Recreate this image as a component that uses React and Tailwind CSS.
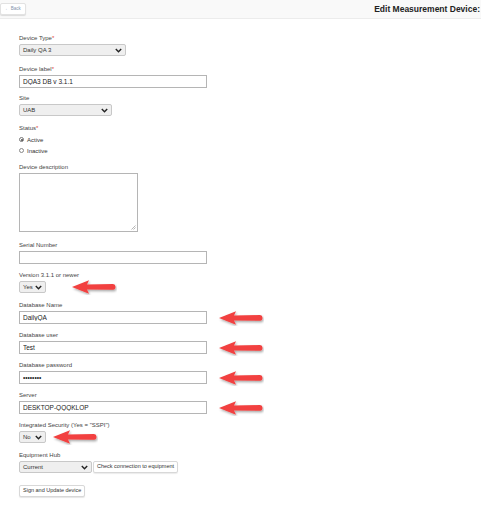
import React from 'react';

const font = { fontFamily: '"Liberation Sans", Arial, sans-serif' };

const Arrow = ({ className = '' }) => (
    <svg width="46" height="16" viewBox="0 0 46 16" className={className}>
        <defs>
            <filter id="sh" x="-20%" y="-40%" width="140%" height="180%">
                <feDropShadow dx="1" dy="1.5" stdDeviation="1" floodColor="#000" floodOpacity="0.35" />
            </filter>
        </defs>
        <path
            d="M1 8 L18 1.2 L16 5.6 L42 5 Q44.5 5.2 44.5 7.8 Q44.5 10.6 42 10.8 L16 10.4 L18 14.8 Z"
            fill="#f2413f"
            filter="url(#sh)"
        />
    </svg>
);

const Chevron = () => (
    <svg width="7" height="5" viewBox="0 0 7 5">
        <path d="M0.8 1 L3.5 3.8 L6.2 1" fill="none" stroke="#222" strokeWidth="1.4" />
    </svg>
);

const FakeSelect = ({ value, width }) => (
    <div
        className={`${width} h-[12px] flex items-center justify-between gap-[2px] pl-[3px] pr-[3px] bg-[#efefef] border border-[#c8c8c8] rounded-[2px] text-[6px] text-[#333]`}
    >
        <span>{value}</span>
        <Chevron />
    </div>
);

const TextBox = ({ value, type = 'text' }) => (
    <input
        type={type}
        value={value}
        readOnly
        className="block w-[188px] h-[13px] px-[3px] border border-[#b5b5b5] bg-white text-[6.5px] text-[#222] outline-none"
        style={font}
    />
);

const Label = ({ children, req }) => (
    <div className="text-[6px] text-[#444] leading-[8px] mb-[2px]">
        {children}
        {req && <span className="text-[#e0453a]">*</span>}
    </div>
);

const App = () => {
    return (
        <div className="w-[481px] h-[512px] bg-white overflow-hidden leading-none" style={font}>
            <div className="h-[19px] bg-[#f9f9f9] border-b border-[#ececec] flex items-center justify-between">
                <div className="h-[12px] w-[26px] bg-white border border-[#e2e2e2] shadow-[0_1px_1px_rgba(0,0,0,0.12)] rounded-[2px] flex items-center justify-center text-[4.5px] text-[#7f93ad]">
                    ← Back
                </div>
                <div className="text-[8.5px] font-bold text-[#222] pr-[1px]">Edit Measurement Device:</div>
            </div>

            <div className="pl-[19px] pt-[15px]">
                <Label req>Device Type</Label>
                <FakeSelect value="Daily QA 3" width="w-[107px]" />

                <div className="mt-[9px]">
                    <Label req>Device label</Label>
                    <TextBox value="DQA3 DB v 3.1.1" />
                </div>

                <div className="mt-[6px]">
                    <Label>Site</Label>
                    <FakeSelect value="UAB" width="w-[93px]" />
                </div>

                <div className="mt-[8px]">
                    <Label req>Status</Label>
                    <div className="flex items-center gap-[3px] text-[6px] text-[#333] h-[11px]">
                        <span className="w-[5px] h-[5px] rounded-full border border-[#777] flex items-center justify-center">
                            <span className="w-[2px] h-[2px] rounded-full bg-[#444]" />
                        </span>
                        Active
                    </div>
                    <div className="flex items-center gap-[3px] text-[6px] text-[#333] h-[11px]">
                        <span className="w-[5px] h-[5px] rounded-full border border-[#888]" />
                        Inactive
                    </div>
                </div>

                <div className="mt-[7px]">
                    <Label>Device description</Label>
                    <div className="relative w-[119px] h-[59px] border border-[#b5b5b5] bg-white">
                        <svg width="5" height="5" viewBox="0 0 5 5" className="absolute right-[1px] bottom-[1px]">
                            <path d="M4.5 0.5 L0.5 4.5 M4.5 2.5 L2.5 4.5" stroke="#999" strokeWidth="0.7" />
                        </svg>
                    </div>
                </div>

                <div className="mt-[9px]">
                    <Label>Serial Number</Label>
                    <TextBox value="" />
                </div>

                <div className="mt-[7px]">
                    <Label>Version 3.1.1 or newer</Label>
                    <div className="flex items-center">
                        <FakeSelect value="Yes" width="w-[27px]" />
                        <Arrow className="ml-[25px] -my-[4px]" />
                    </div>
                </div>

                {[
                    ['Database Name', 'DailyQA', 'text', 'mt-[8px]'],
                    ['Database user', 'Test', 'text', 'mt-[7px]'],
                    ['Database password', '12345678', 'password', 'mt-[7px]'],
                    ['Server', 'DESKTOP-QQQKLOP', 'text', 'mt-[7px]'],
                ].map(([label, value, type, mt]) => (
                    <div key={label} className={mt}>
                        <Label>{label}</Label>
                        <div className="flex items-center">
                            <TextBox value={value} type={type} />
                            <Arrow className="ml-[11px] -my-[4px]" />
                        </div>
                    </div>
                ))}

                <div className="mt-[7px]">
                    <Label>Integrated Security (Yes = "SSPI")</Label>
                    <div className="flex items-center">
                        <FakeSelect value="No" width="w-[27px]" />
                        <Arrow className="ml-[6px] -my-[4px]" />
                    </div>
                </div>

                <div className="mt-[8px]">
                    <Label>Equipment Hub</Label>
                    <div className="flex items-center">
                        <FakeSelect value="Current" width="w-[73px]" />
                        <div className="ml-[1px] h-[12px] px-[3px] flex items-center bg-white border border-[#d8d8d8] rounded-[2px] shadow-[0_1px_1px_rgba(0,0,0,0.08)] text-[5.5px] text-[#333]">
                            Check connection to equipment
                        </div>
                    </div>
                </div>

                <div className="mt-[12px] inline-flex h-[12px] px-[3px] items-center bg-white border border-[#d8d8d8] rounded-[2px] shadow-[0_1px_1px_rgba(0,0,0,0.1)] text-[5.5px] text-[#333]">
                    Sign and Update device
                </div>
            </div>
        </div>
    );
};

export default App;
